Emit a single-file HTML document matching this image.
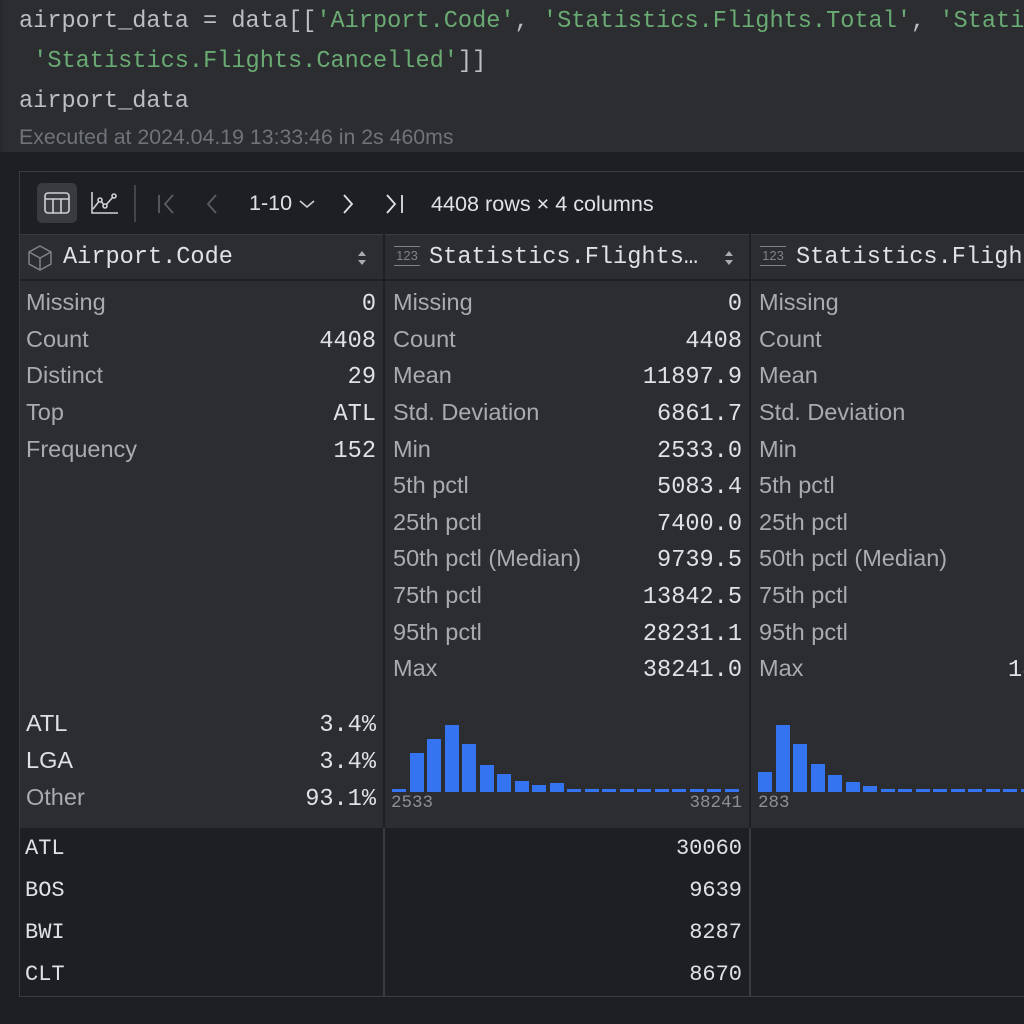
<!DOCTYPE html>
<html><head><meta charset="utf-8"><style>
*{margin:0;padding:0;box-sizing:border-box}
body{width:1024px;height:1024px;background:#1e1f22;position:relative;overflow:hidden;font-family:"Liberation Sans",sans-serif}
.a{position:absolute;white-space:pre}
.m{font-family:"Liberation Mono",monospace}
.code{font-size:23.6px;color:#bcbec4}
.s{color:#6aab73}
.lab{font-size:23.5px;color:#a8abb0;margin-top:-1px}
.val{font-size:23.6px;color:#dfe1e5;text-align:right}
.bar{position:absolute;background:#3574f0}
</style></head><body>
<div class="a" style="left:0;top:0;width:1024px;height:152px;background:#2b2d30"></div>
<div class="a" style="left:0;top:0;width:3px;height:152px;background:#26282b"></div>
<div class="a m code" style="left:19px;top:8px">airport_data = data[[<span class="s">'Airport.Code'</span>, <span class="s">'Statistics.Flights.Total'</span>, <span class="s">'Stati</span></div>
<div class="a m code" style="left:19px;top:48px"> <span class="s">'Statistics.Flights.Cancelled'</span>]]</div>
<div class="a m code" style="left:19px;top:88px">airport_data</div>
<div class="a" style="left:19px;top:125px;font-size:21.3px;color:#6f737a">Executed at 2024.04.19 13:33:46 in 2s 460ms</div>

<div class="a" style="left:19px;top:171px;width:1010px;height:826px;border:1px solid #393b40;background:#1e1f22"></div>
<div class="a" style="left:37px;top:183px;width:40px;height:40px;background:#393b40;border-radius:5px"></div>
<svg class="a" style="left:43px;top:190px" width="28" height="26" viewBox="0 0 28 26" fill="none" stroke="#ced0d6" stroke-width="1.6"><rect x="2" y="3" width="24" height="20" rx="3"/><line x1="2" y1="9" x2="26" y2="9"/><line x1="10" y1="9" x2="10" y2="23"/><line x1="18" y1="9" x2="18" y2="23"/></svg>
<svg class="a" style="left:90px;top:189px" width="30" height="28" viewBox="0 0 30 28" fill="none" stroke="#ced0d6" stroke-width="1.6"><path d="M2 3V24H28"/><path d="M3 20L10 11L15 17L23 8"/><circle cx="10" cy="11" r="2" fill="#1e1f22"/><circle cx="15" cy="17" r="2" fill="#1e1f22"/><circle cx="24" cy="7" r="2" fill="#1e1f22"/></svg>
<div class="a" style="left:134px;top:185px;width:2px;height:37px;background:#43454a"></div>
<svg class="a" style="left:156px;top:192px" width="22" height="24" viewBox="0 0 22 24" fill="none" stroke="#5a5d63" stroke-width="1.8"><line x1="3" y1="3" x2="3" y2="21"/><path d="M17 3L9 12L17 21"/></svg>
<svg class="a" style="left:204px;top:192px" width="16" height="24" viewBox="0 0 16 24" fill="none" stroke="#5a5d63" stroke-width="1.8"><path d="M12 3L4 12L12 21"/></svg>
<div class="a" style="left:249px;top:191px;font-size:21.5px;color:#dfe1e5">1-10</div>
<svg class="a" style="left:298px;top:198px" width="18" height="12" viewBox="0 0 18 12" fill="none" stroke="#ced0d6" stroke-width="1.6"><path d="M2 3L9 9L16 3"/></svg>
<svg class="a" style="left:340px;top:192px" width="16" height="24" viewBox="0 0 16 24" fill="none" stroke="#dfe1e5" stroke-width="1.8"><path d="M4 3L12 12L4 21"/></svg>
<svg class="a" style="left:384px;top:192px" width="22" height="24" viewBox="0 0 22 24" fill="none" stroke="#dfe1e5" stroke-width="1.8"><path d="M3 3L11 12L3 21"/><line x1="18" y1="3" x2="18" y2="21"/></svg>
<div class="a" style="left:431px;top:191px;font-size:21.6px;color:#dfe1e5">4408 rows × 4 columns</div>

<div class="a" style="left:20px;top:234px;width:1010px;height:594px;background:#2b2d30"></div>
<div class="a" style="left:20px;top:234px;width:1010px;height:1px;background:#393b40"></div>
<div class="a" style="left:20px;top:279px;width:1010px;height:2px;background:#1e1f22"></div>
<div class="a" style="left:383px;top:234px;width:2px;height:763px;background:#1e1f22"></div>
<div class="a" style="left:749px;top:234px;width:2px;height:763px;background:#1e1f22"></div>
<div class="a" style="left:383px;top:828px;width:2px;height:169px;background:#393b40"></div>
<div class="a" style="left:749px;top:828px;width:2px;height:169px;background:#393b40"></div>

<svg class="a" style="left:27px;top:244px" width="26" height="28" viewBox="0 0 26 28" fill="none" stroke="#7e8187" stroke-width="1.5"><path d="M13 2L24 8V20L13 26L2 20V8Z"/><path d="M2 8L13 14L24 8M13 14V26"/></svg>
<div class="a m" style="left:63px;top:244px;font-size:23.6px;color:#dfe1e5">Airport.Code</div>
<svg class="a" style="left:356px;top:249px" width="12" height="18" viewBox="0 0 12 18" fill="#a8abb0"><path d="M6 2L10 7H2Z"/><path d="M6 16L10 11H2Z"/></svg>

<div class="a" style="left:394px;top:246px;font-size:13px;color:#7e8187;border-top:1.5px solid #7e8187;border-bottom:1.5px solid #7e8187;line-height:18px;width:26px;text-align:center">123</div>
<div class="a m" style="left:429px;top:244px;font-size:23.6px;color:#dfe1e5">Statistics.Flights…</div>
<svg class="a" style="left:723px;top:249px" width="12" height="18" viewBox="0 0 12 18" fill="#a8abb0"><path d="M6 2L10 7H2Z"/><path d="M6 16L10 11H2Z"/></svg>

<div class="a" style="left:760px;top:246px;font-size:13px;color:#7e8187;border-top:1.5px solid #7e8187;border-bottom:1.5px solid #7e8187;line-height:18px;width:26px;text-align:center">123</div>
<div class="a m" style="left:796px;top:244px;font-size:23.6px;color:#dfe1e5">Statistics.Fligh</div>

<div class="a lab" style="left:26px;top:290px">Missing</div><div class="a m val" style="left:200px;width:176px;top:291px">0</div>
<div class="a lab" style="left:26px;top:327px">Count</div><div class="a m val" style="left:200px;width:176px;top:328px">4408</div>
<div class="a lab" style="left:26px;top:363px">Distinct</div><div class="a m val" style="left:200px;width:176px;top:364px">29</div>
<div class="a lab" style="left:26px;top:400px">Top</div><div class="a m val" style="left:200px;width:176px;top:401px">ATL</div>
<div class="a lab" style="left:26px;top:437px">Frequency</div><div class="a m val" style="left:200px;width:176px;top:438px">152</div>

<div class="a lab" style="left:26px;top:711px;color:#dfe1e5">ATL</div><div class="a m val" style="left:200px;width:176px;top:712px">3.4%</div>
<div class="a lab" style="left:26px;top:748px;color:#dfe1e5">LGA</div><div class="a m val" style="left:200px;width:176px;top:749px">3.4%</div>
<div class="a lab" style="left:26px;top:785px">Other</div><div class="a m val" style="left:200px;width:176px;top:786px">93.1%</div>

<div class="a lab" style="left:393px;top:290px">Missing</div><div class="a m val" style="left:560px;width:182px;top:291px">0</div>
<div class="a lab" style="left:393px;top:327px">Count</div><div class="a m val" style="left:560px;width:182px;top:328px">4408</div>
<div class="a lab" style="left:393px;top:363px">Mean</div><div class="a m val" style="left:560px;width:182px;top:364px">11897.9</div>
<div class="a lab" style="left:393px;top:400px">Std. Deviation</div><div class="a m val" style="left:560px;width:182px;top:401px">6861.7</div>
<div class="a lab" style="left:393px;top:437px">Min</div><div class="a m val" style="left:560px;width:182px;top:438px">2533.0</div>
<div class="a lab" style="left:393px;top:473px">5th pctl</div><div class="a m val" style="left:560px;width:182px;top:474px">5083.4</div>
<div class="a lab" style="left:393px;top:510px">25th pctl</div><div class="a m val" style="left:560px;width:182px;top:511px">7400.0</div>
<div class="a lab" style="left:393px;top:546px">50th pctl (Median)</div><div class="a m val" style="left:560px;width:182px;top:547px">9739.5</div>
<div class="a lab" style="left:393px;top:583px">75th pctl</div><div class="a m val" style="left:560px;width:182px;top:584px">13842.5</div>
<div class="a lab" style="left:393px;top:620px">95th pctl</div><div class="a m val" style="left:560px;width:182px;top:621px">28231.1</div>
<div class="a lab" style="left:393px;top:656px">Max</div><div class="a m val" style="left:560px;width:182px;top:657px">38241.0</div>

<div class="a lab" style="left:759px;top:290px">Missing</div>
<div class="a lab" style="left:759px;top:327px">Count</div>
<div class="a lab" style="left:759px;top:363px">Mean</div>
<div class="a lab" style="left:759px;top:400px">Std. Deviation</div>
<div class="a lab" style="left:759px;top:437px">Min</div>
<div class="a lab" style="left:759px;top:473px">5th pctl</div>
<div class="a lab" style="left:759px;top:510px">25th pctl</div>
<div class="a lab" style="left:759px;top:546px">50th pctl (Median)</div>
<div class="a lab" style="left:759px;top:583px">75th pctl</div>
<div class="a lab" style="left:759px;top:620px">95th pctl</div>
<div class="a lab" style="left:759px;top:656px">Max</div>
<div class="a m val" style="left:1008px;top:657px;text-align:left">13</div>

<div class="bar" style="left:392px;top:789px;width:14px;height:3px"></div>
<div class="bar" style="left:410px;top:753px;width:14px;height:39px"></div>
<div class="bar" style="left:427px;top:739px;width:14px;height:53px"></div>
<div class="bar" style="left:445px;top:725px;width:14px;height:67px"></div>
<div class="bar" style="left:462px;top:744px;width:14px;height:48px"></div>
<div class="bar" style="left:480px;top:765px;width:14px;height:27px"></div>
<div class="bar" style="left:497px;top:774px;width:14px;height:18px"></div>
<div class="bar" style="left:515px;top:781px;width:14px;height:11px"></div>
<div class="bar" style="left:532px;top:785px;width:14px;height:7px"></div>
<div class="bar" style="left:550px;top:783px;width:14px;height:9px"></div>
<div class="bar" style="left:567px;top:789px;width:14px;height:3px"></div>
<div class="bar" style="left:585px;top:789px;width:14px;height:3px"></div>
<div class="bar" style="left:602px;top:789px;width:14px;height:3px"></div>
<div class="bar" style="left:620px;top:789px;width:14px;height:3px"></div>
<div class="bar" style="left:637px;top:789px;width:14px;height:3px"></div>
<div class="bar" style="left:655px;top:789px;width:14px;height:3px"></div>
<div class="bar" style="left:672px;top:789px;width:14px;height:3px"></div>
<div class="bar" style="left:690px;top:789px;width:14px;height:3px"></div>
<div class="bar" style="left:707px;top:789px;width:14px;height:3px"></div>
<div class="bar" style="left:725px;top:789px;width:14px;height:3px"></div>
<div class="a m" style="left:391px;top:793px;font-size:17.5px;color:#8c8f94">2533</div>
<div class="a m" style="left:600px;width:142px;text-align:right;top:793px;font-size:17.5px;color:#8c8f94">38241</div>

<div class="bar" style="left:758px;top:772px;width:14px;height:20px"></div>
<div class="bar" style="left:776px;top:725px;width:14px;height:67px"></div>
<div class="bar" style="left:793px;top:744px;width:14px;height:48px"></div>
<div class="bar" style="left:811px;top:764px;width:14px;height:28px"></div>
<div class="bar" style="left:828px;top:775px;width:14px;height:17px"></div>
<div class="bar" style="left:846px;top:782px;width:14px;height:10px"></div>
<div class="bar" style="left:863px;top:786px;width:14px;height:6px"></div>
<div class="bar" style="left:881px;top:789px;width:14px;height:3px"></div>
<div class="bar" style="left:898px;top:789px;width:14px;height:3px"></div>
<div class="bar" style="left:916px;top:789px;width:14px;height:3px"></div>
<div class="bar" style="left:933px;top:789px;width:14px;height:3px"></div>
<div class="bar" style="left:951px;top:789px;width:14px;height:3px"></div>
<div class="bar" style="left:968px;top:789px;width:14px;height:3px"></div>
<div class="bar" style="left:986px;top:789px;width:14px;height:3px"></div>
<div class="bar" style="left:1003px;top:789px;width:14px;height:3px"></div>
<div class="bar" style="left:1021px;top:789px;width:14px;height:3px"></div>
<div class="a m" style="left:758px;top:793px;font-size:17.5px;color:#8c8f94">283</div>

<div class="a m" style="left:25px;top:836px;font-size:22px;color:#dfe1e5">ATL</div>
<div class="a m" style="left:25px;top:878px;font-size:22px;color:#dfe1e5">BOS</div>
<div class="a m" style="left:25px;top:920px;font-size:22px;color:#dfe1e5">BWI</div>
<div class="a m" style="left:25px;top:962px;font-size:22px;color:#dfe1e5">CLT</div>
<div class="a m" style="left:560px;width:182px;text-align:right;top:836px;font-size:22px;color:#dfe1e5">30060</div>
<div class="a m" style="left:560px;width:182px;text-align:right;top:878px;font-size:22px;color:#dfe1e5">9639</div>
<div class="a m" style="left:560px;width:182px;text-align:right;top:920px;font-size:22px;color:#dfe1e5">8287</div>
<div class="a m" style="left:560px;width:182px;text-align:right;top:962px;font-size:22px;color:#dfe1e5">8670</div>
</body></html>
